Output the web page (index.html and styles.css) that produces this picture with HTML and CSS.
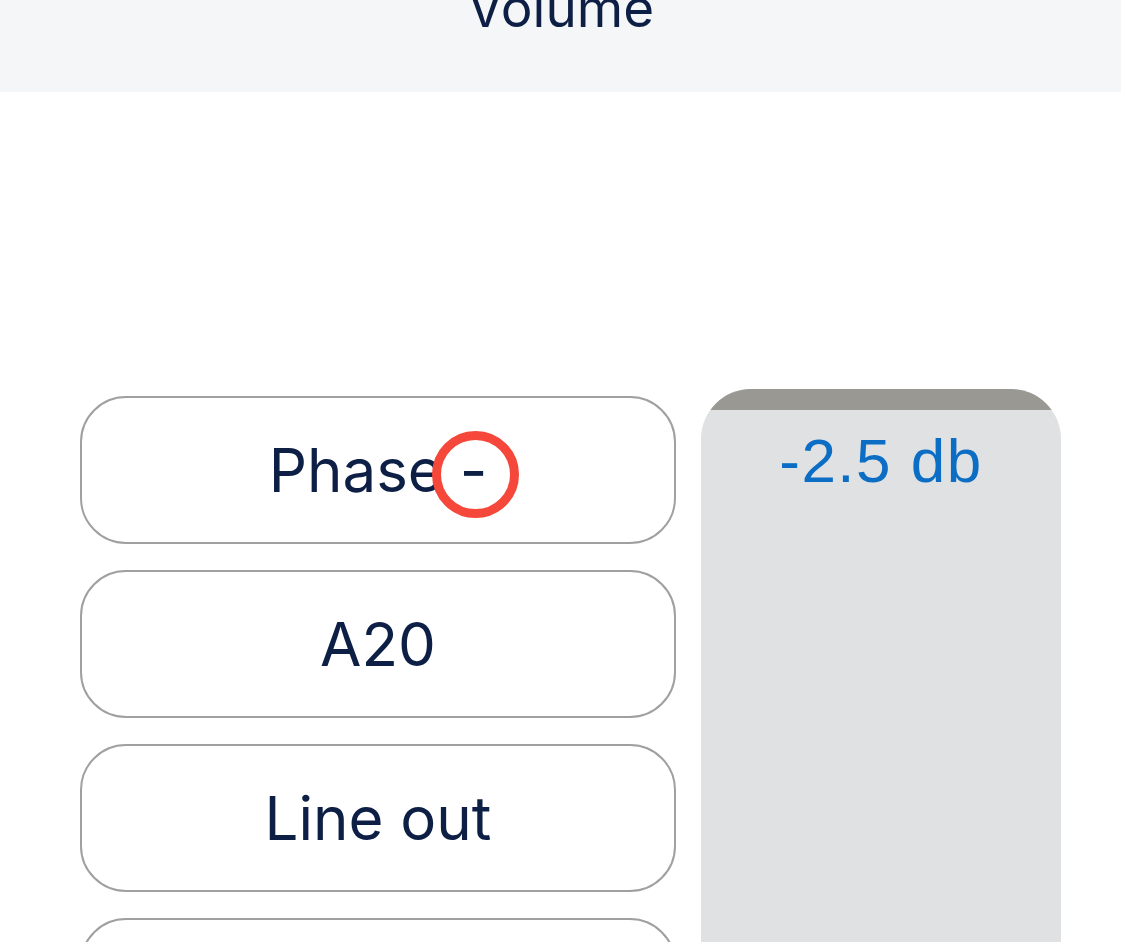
FILE: index.html
```html
<!DOCTYPE html>
<html lang="en">
<head>
    <meta charset="UTF-8">
    <meta name="viewport" content="width=device-width, initial-scale=1.0">
    <title>Volume</title>
    <link rel="stylesheet" href="styles.css">
</head>
<body>
    <header class="top-bar">
        <h1 class="title">Volume</h1>
    </header>

    <main class="controls">
        <div class="button-list">
            <button class="option-btn">
                Phase <span class="marked">-</span>
            </button>
            <button class="option-btn">A20</button>
            <button class="option-btn">Line out</button>
            <button class="option-btn"></button>
        </div>

        <div class="level-panel">
            <div class="level-cap"></div>
            <div class="level-value">-2.5 db</div>
        </div>
    </main>
</body>
</html>
```

FILE: styles.css
```css
body {
    margin: 0;
    padding: 0;
    background: #ffffff;
    color: #0d1f45;
    font-family: Inter, 'Noto Sans', sans-serif;
    overflow: hidden;
}

.top-bar {
    height: 92px;
    background: #f5f6f8;
    display: flex;
    justify-content: center;
    align-items: flex-end;
    overflow: hidden;
}

.title {
    margin: 0 0 57px 0;
    font-size: 53px;
    font-weight: 400;
    line-height: 1;
}

.controls {
    display: flex;
    gap: 25px;
    padding: 297px 60px 0 80px;
}

.button-list {
    display: flex;
    flex-direction: column;
    gap: 26px;
    width: 596px;
    margin-top: 7px;
}

.option-btn {
    height: 148px;
    border: 2px solid #a0a0a0;
    border-radius: 46px;
    background: #ffffff;
    color: #0d1f45;
    font-family: Inter, 'Noto Sans', sans-serif;
    font-size: 60px;
    font-weight: 400;
    padding: 0;
    cursor: pointer;
}

.marked {
    position: relative;
}

.marked::after {
    content: '';
    position: absolute;
    left: 50%;
    top: 50%;
    width: 69px;
    height: 69px;
    margin: -39px 0 0 -42px;
    border: 9px solid #f5473a;
    border-radius: 50%;
}

.level-panel {
    width: 360px;
    height: 700px;
    background: #dfe1e3;
    border-radius: 50px 50px 0 0;
    overflow: hidden;
}

.level-cap {
    height: 21px;
    background: #9a9893;
}

.level-value {
    text-align: center;
    color: #0c6dc5;
    font-family: 'Liberation Sans', Arial, sans-serif;
    font-size: 62px;
    letter-spacing: 1.5px;
    margin-top: 15px;
}
```
